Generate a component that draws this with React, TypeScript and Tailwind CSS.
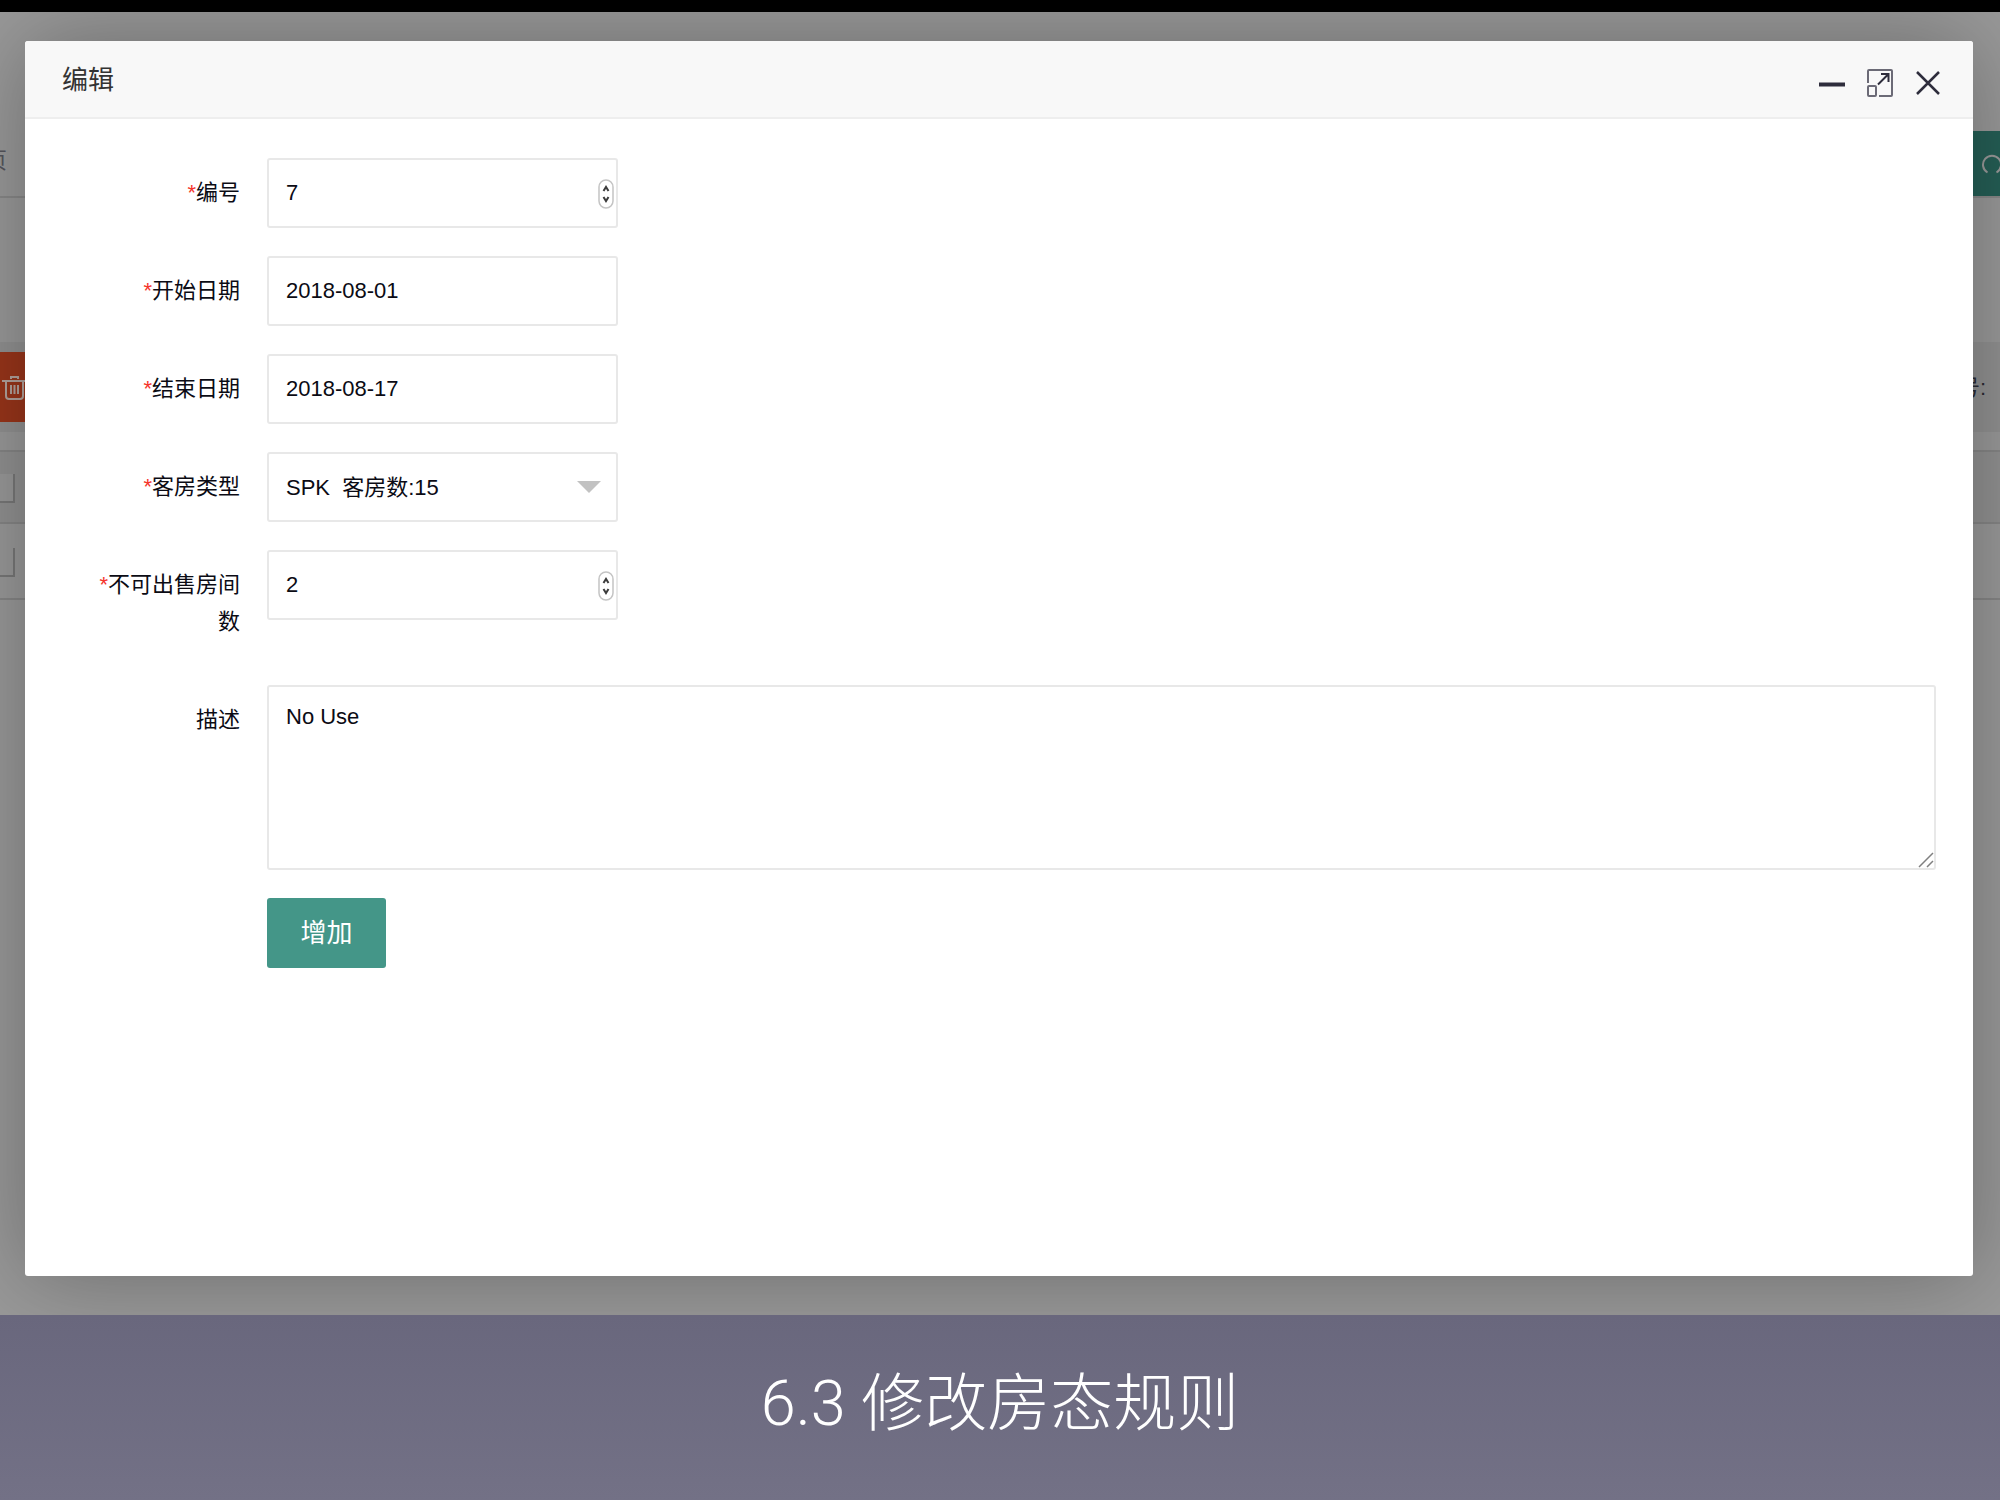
import { useState } from 'react'
import type { ReactNode } from 'react'

interface FieldProps {
  id: string
  label: string
  required?: boolean
  children: ReactNode
}

const CONTROL =
  'block w-full h-[70px] rounded-[3px] border-2 border-[#e8e8e8] bg-white pl-[17px] text-[22px] text-[#0b0b14] outline-none'

function Field({ id, label, required = false, children }: FieldProps) {
  return (
    <div className="flex items-start">
      <label
        htmlFor={id}
        className="w-[196px] shrink-0 px-[27px] pt-4 pb-[17px] text-right text-[22px] leading-[37px] break-all text-[#0b0b14]"
      >
        {required && <span className="text-[#f5352b]">*</span>}
        {label}
      </label>
      {children}
    </div>
  )
}

function NumberInput({ id, defaultValue }: { id: string; defaultValue: number }) {
  return (
    <div className="relative w-[351px]">
      <input
        id={id}
        type="number"
        defaultValue={defaultValue}
        className={`${CONTROL} [appearance:textfield] [&::-webkit-inner-spin-button]:appearance-none`}
      />
      <svg
        className="pointer-events-none absolute top-[21px] right-[4px] h-[30px] w-4"
        viewBox="0 0 16 30"
        fill="none"
      >
        <rect x="1" y="1" width="14" height="28" rx="7" fill="#fff" stroke="#c4c4c4" strokeWidth="1.5" />
        <path d="M5.500 12 8 8l2.500 4M5.500 18 8 22l2.500-4" stroke="#3c3c3c" strokeWidth="2" />
      </svg>
    </div>
  )
}

// page that sits dimmed behind the dialog
function Backdrop() {
  return (
    <div className="col-start-1 row-start-1 bg-[#999999] text-[22px]" aria-hidden="true">
      <div className="flex h-[186px] items-end justify-between border-b-2 border-[#888888]">
        <span className="-ml-[15px] h-[52px] text-[#55555c]">页</span>
        <div className="flex h-[65px] w-[60px] items-center overflow-hidden bg-[#255f56] pl-10">
          <svg className="h-6 w-6 shrink-0" viewBox="0 0 24 24" fill="none">
            <path d="M7.500 20.500A9 9 0 1 1 16.500 20.500" stroke="#9a9a9a" strokeWidth="2" />
          </svg>
        </div>
      </div>
      <div className="mt-[144px] flex h-[90px] items-center justify-between bg-[#919191]">
        <div className="flex h-[70px] w-[60px] items-center bg-[#99351a]">
          <svg className="h-7 w-7" viewBox="0 0 28 28" fill="none" stroke="#b3a39d" strokeWidth="2">
            <path d="M2 8h25M11 6V4h7v2M6 8v15q0 3 3 3h11q3 0 3-3V8M11 12v9M14.500 12v9M18 12v9" />
          </svg>
        </div>
        <span className="w-[42px] text-[#2b2b33]">号:</span>
      </div>
      <div className="mt-[18px] flex h-[74px] items-center border-y-2 border-[#868686] bg-[#919191] pt-[2px]">
        <div className="h-[29px] w-[15px] border-r-2 border-b-2 border-[#787878] bg-[#999999]" />
      </div>
      <div className="flex h-[76px] items-center border-b-2 border-[#868686] pt-[2px]">
        <div className="h-[29px] w-[15px] border-r-2 border-b-2 border-[#787878]" />
      </div>
    </div>
  )
}

export default function App() {
  const [roomType, setRoomType] = useState('spk')

  return (
    <div className="flex min-h-screen flex-col bg-black font-['Liberation_Sans','Noto_Sans_CJK_SC',sans-serif]">
      <main className="mt-3 grid flex-1 overflow-hidden">
        <Backdrop />

        <section
          role="dialog"
          aria-labelledby="dialog-title"
          className="z-10 col-start-1 row-start-1 mt-[29px] mr-[27px] mb-[39px] ml-[25px] rounded-[3px] bg-white shadow-[0_0_90px_rgba(0,0,0,0.3)]"
        >
          <header className="flex h-[78px] items-center justify-between rounded-t-[3px] border-b-2 border-[#eeeeee] bg-[#f8f8f8] pt-[3px] pr-[31px] pl-[37px]">
            <h2 id="dialog-title" className="text-[26px] text-[#333333]">
              编辑
            </h2>
            <div className="flex items-center gap-5 pt-1 text-[#2e2d3c]">
              <button type="button" aria-label="最小化">
                <svg className="h-7 w-7" viewBox="0 0 28 28">
                  <path d="M1 15.500h26" stroke="currentColor" strokeWidth="4" />
                </svg>
              </button>
              <button type="button" aria-label="最大化">
                <svg className="h-7 w-7" viewBox="0 0 28 28" fill="none" stroke="currentColor">
                  <path
                    d="M2 14V2q0-1 1-1h22q1 0 1 1v24q0 1-1 1H13"
                    stroke="#6b6a76"
                    strokeWidth="2"
                  />
                  <rect x="2" y="17" width="8" height="10" rx="1" stroke="#6b6a76" strokeWidth="2" />
                  <path d="M12 15.500 22 5.500M15 5h7.500v8" strokeWidth="2" />
                </svg>
              </button>
              <button type="button" aria-label="关闭">
                <svg className="h-7 w-7" viewBox="0 0 28 28">
                  <path d="m3 3 22 22M25 3 3 25" stroke="currentColor" strokeWidth="2.500" />
                </svg>
              </button>
            </div>
          </header>

          <form
            className="flex flex-col gap-7 pt-[39px] pr-[37px] pl-[46px]"
            onSubmit={(e) => e.preventDefault()}
          >
            <Field id="number" label="编号" required>
              <NumberInput id="number" defaultValue={7} />
            </Field>
            <Field id="start" label="开始日期" required>
              <div className="w-[351px]">
                <input id="start" type="text" defaultValue="2018-08-01" className={CONTROL} />
              </div>
            </Field>
            <Field id="end" label="结束日期" required>
              <div className="w-[351px]">
                <input id="end" type="text" defaultValue="2018-08-17" className={CONTROL} />
              </div>
            </Field>
            <Field id="room-type" label="客房类型" required>
              <div className="relative w-[351px]">
                <select
                  id="room-type"
                  value={roomType}
                  onChange={(e) => setRoomType(e.target.value)}
                  className={`${CONTROL} appearance-none`}
                >
                  <option value="spk">{'SPK\u00a0\u00a0客房数:15'}</option>
                </select>
                <svg
                  className="pointer-events-none absolute top-[29px] right-[17px] h-3 w-6"
                  viewBox="0 0 24 12"
                >
                  <path d="M0 0h24L12 12z" fill="#c2c2c2" />
                </svg>
              </div>
            </Field>
            <Field id="unavailable" label="不可出售房间数" required>
              <NumberInput id="unavailable" defaultValue={2} />
            </Field>
            <Field id="description" label="描述">
              <div className="relative flex-1">
                <textarea
                  id="description"
                  defaultValue="No Use"
                  className="block h-[185px] w-full resize-none rounded-[3px] border-2 border-[#e8e8e8] px-[17px] py-3 text-[22px] leading-9 text-[#0b0b14] outline-none"
                />
                <svg
                  className="pointer-events-none absolute right-[2px] bottom-[2px] h-4 w-4"
                  viewBox="0 0 16 16"
                >
                  <path d="M1 15 15 1M9 15l6-6" stroke="#808080" strokeWidth="1.500" />
                </svg>
              </div>
            </Field>
            <div className="pl-[196px]">
              <button
                type="submit"
                className="h-[70px] w-[119px] rounded-[3px] bg-[#449688] text-[26px] text-white"
              >
                增加
              </button>
            </div>
          </form>
        </section>
      </main>

      <footer className="flex h-[185px] items-center justify-center bg-linear-to-b from-[#69677d] to-[#737186]">
        <p className="pb-2 font-['Roboto','Noto_Sans_CJK_SC',sans-serif] text-[63px] leading-none font-light text-white">
          6.3 修改房态规则
        </p>
      </footer>
    </div>
  )
}
